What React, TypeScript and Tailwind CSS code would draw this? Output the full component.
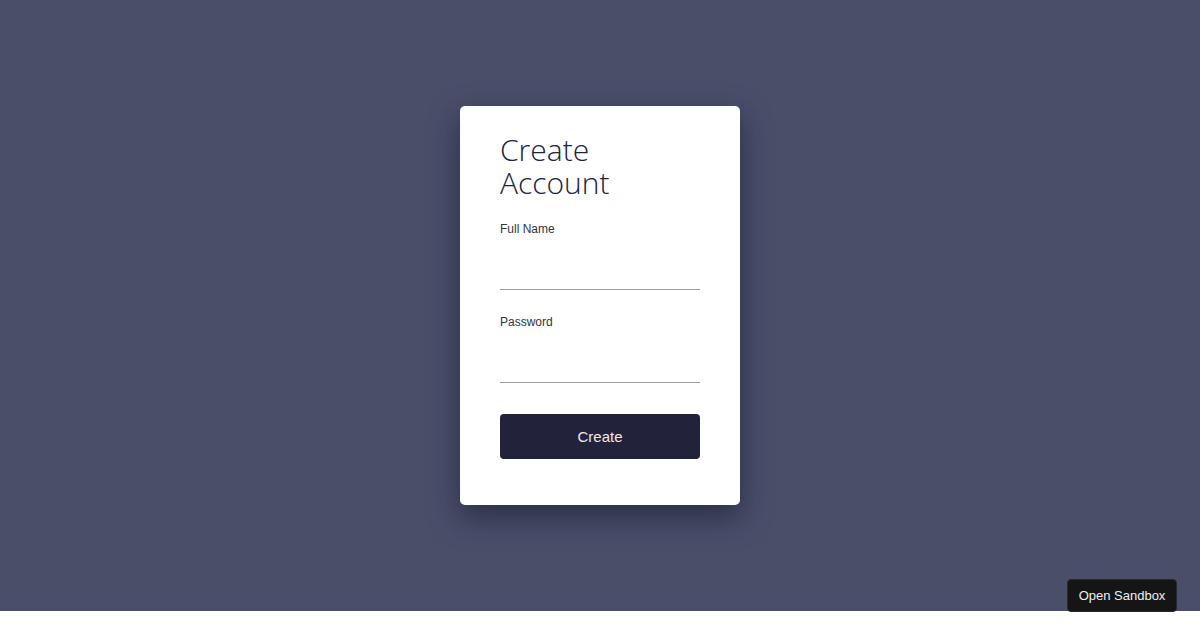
export default function App() {
  return (
    <div className="relative w-full h-[630px] bg-white font-['Liberation_Sans',Arial,sans-serif]">
      <div className="h-[611px] bg-[#4a4e69] flex items-center justify-center">
        <div className="w-[280px] bg-white rounded-[5px] px-10 pt-[27px] pb-[46px] shadow-[0_12px_30px_rgba(20,20,40,0.55)]">
          <h1 className="font-['Open_Sans',sans-serif] font-light text-[30px] leading-[33px] text-[#22223b] w-[150px]">
            Create Account
          </h1>
          <form className="mt-[22px]" onSubmit={(e) => e.preventDefault()}>
            <div className="mb-6">
              <label className="block text-[12px] leading-[17px] text-[#333344]">Full Name</label>
              <input
                type="text"
                className="block w-full h-[52px] border-b border-[#9e9e9e] outline-none bg-transparent"
              />
            </div>
            <div>
              <label className="block text-[12px] leading-[17px] text-[#333344]">Password</label>
              <input
                type="password"
                className="block w-full h-[52px] border-b border-[#9e9e9e] outline-none bg-transparent"
              />
            </div>
            <button
              type="submit"
              className="mt-[31px] w-full h-[45px] pt-[2px] rounded-[4px] bg-[#22223b] text-[#f2e9e4] text-[15px]"
            >
              Create
            </button>
          </form>
        </div>
      </div>
      <button className="absolute left-[1067px] top-[579px] w-[110px] h-[33px] rounded-[4px] bg-[#151515] border border-[#2a2a2a] text-[13px] text-[#f0f0f0]">
        Open Sandbox
      </button>
    </div>
  );
}
